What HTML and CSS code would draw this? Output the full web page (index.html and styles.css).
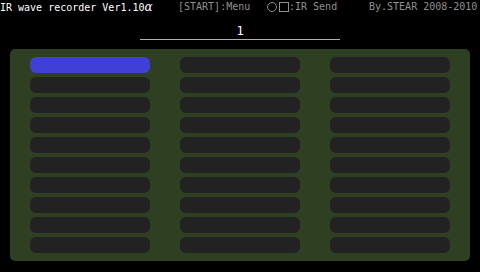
FILE: index.html
```html
<!DOCTYPE html>
<html lang="en">
<head>
    <meta charset="UTF-8">
    <title>IR wave recorder</title>
    <link rel="stylesheet" href="styles.css">
</head>
<body>
    <div class="header">
        <div class="title">IR wave recorder Ver1.10<span class="alpha">α</span></div>
        <div class="hint menu-hint">[START]:Menu</div>
        <div class="hint send-hint"><span class="circle"></span><span class="square"></span>:IR Send</div>
        <div class="hint author">By.STEAR 2008-2010</div>
    </div>
    <div class="pager">1</div>
    <div class="panel">
        <div class="slot active"></div><div class="slot"></div><div class="slot"></div>
        <div class="slot"></div><div class="slot"></div><div class="slot"></div>
        <div class="slot"></div><div class="slot"></div><div class="slot"></div>
        <div class="slot"></div><div class="slot"></div><div class="slot"></div>
        <div class="slot"></div><div class="slot"></div><div class="slot"></div>
        <div class="slot"></div><div class="slot"></div><div class="slot"></div>
        <div class="slot"></div><div class="slot"></div><div class="slot"></div>
        <div class="slot"></div><div class="slot"></div><div class="slot"></div>
        <div class="slot"></div><div class="slot"></div><div class="slot"></div>
        <div class="slot"></div><div class="slot"></div><div class="slot"></div>
    </div>
</body>
</html>
```

FILE: styles.css
```css
* {
    margin: 0;
    padding: 0;
}
body {
    width: 480px;
    height: 272px;
    background-color: #000;
    font-family: "DejaVu Sans Mono", "Liberation Mono", monospace;
    font-size: 10px;
    overflow: hidden;
}
.header {
    height: 14px;
    line-height: 14px;
    display: flex;
    white-space: nowrap;
}
.title {
    color: #fff;
    width: 178px;
}
.title .alpha {
    font-family: "DejaVu Serif", serif;
    font-style: italic;
    font-size: 12px;
}
.hint {
    color: #909090;
}
.menu-hint {
    width: 89px;
}
.send-hint {
    width: 102px;
    display: flex;
    align-items: center;
}
.send-hint .circle {
    width: 10px;
    height: 10px;
    border: 1px solid #909090;
    border-radius: 50%;
    margin-right: 2px;
    box-sizing: border-box;
}
.send-hint .square {
    width: 10px;
    height: 10px;
    border: 1px solid #909090;
    box-sizing: border-box;
}
.pager {
    width: 200px;
    height: 26px;
    margin: 0 auto;
    color: #fff;
    font-size: 12px;
    line-height: 14px;
    padding-top: 10px;
    box-sizing: border-box;
    text-align: center;
    border-bottom: 1px solid #b0b0b0;
}
.panel {
    margin: 9px 10px 0;
    padding: 8px 20px;
    background-color: #2f4022;
    border-radius: 5px;
    display: grid;
    grid-template-columns: repeat(3, 120px);
    grid-auto-rows: 16px;
    column-gap: 30px;
    row-gap: 4px;
}
.slot {
    background-color: #222;
    border-radius: 6px;
}
.slot.active {
    background-color: #4040d6;
}
```
